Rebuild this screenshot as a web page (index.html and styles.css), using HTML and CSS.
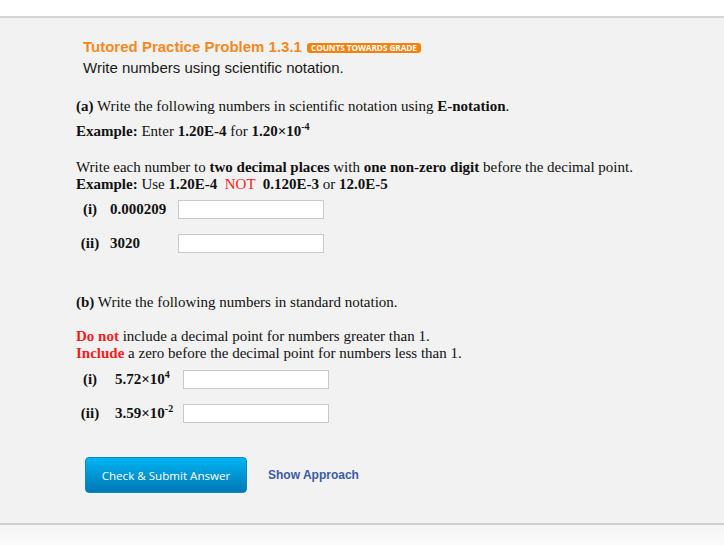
FILE: index.html
```html
<!DOCTYPE html>
<html lang="en">
<head>
<meta charset="utf-8">
<title>Tutored Practice Problem 1.3.1</title>
<link rel="stylesheet" href="styles.css">
</head>
<body>
<div class="topbar"></div>
<main class="panel">
  <header class="head">
    <h1 class="title">Tutored Practice Problem 1.3.1<span class="badge">COUNTS TOWARDS GRADE</span></h1>
    <p class="subtitle">Write numbers using scientific notation.</p>
  </header>
  <section class="content">
    <p class="p-a"><b>(a)</b> Write the following numbers in scientific notation using <b>E-notation</b>.</p>
    <p class="p-ex"><b>Example:</b> Enter <b>1.20E-4</b> for <b>1.20×10<sup>-4</sup></b></p>
    <p class="p-rule">Write each number to <b>two decimal places</b> with <b>one non-zero digit</b> before the decimal point.<br><b>Example:</b> Use <b>1.20E-4</b> &nbsp;<span class="red">NOT</span> &nbsp;<b>0.120E-3</b> or <b>12.0E-5</b></p>
    <div class="qtable qa">
      <span class="lbl">(i)</span><span class="num">0.000209</span><input class="ans" type="text" aria-label="(a)(i)">
      <span class="lbl">(ii)</span><span class="num">3020</span><input class="ans" type="text" aria-label="(a)(ii)">
    </div>
    <p class="p-b"><b>(b)</b> Write the following numbers in standard notation.</p>
    <p class="p-rule2"><b class="red">Do not</b> include a decimal point for numbers greater than 1.<br><b class="red">Include</b> a zero before the decimal point for numbers less than 1.</p>
    <div class="qtable qb">
      <span class="lbl">(i)</span><span class="num">5.72×10<sup>4</sup></span><input class="ans" type="text" aria-label="(b)(i)">
      <span class="lbl">(ii)</span><span class="num">3.59×10<sup>-2</sup></span><input class="ans" type="text" aria-label="(b)(ii)">
    </div>
    <div class="actions">
      <button class="submit" type="button">Check &amp; Submit Answer</button>
      <a class="approach" href="#">Show Approach</a>
    </div>
  </section>
</main>
<div class="footer"></div>
</body>
</html>
```
FILE: styles.css
```css
html, body {
  margin: 0;
  padding: 0;
  background: #ffffff;
}
.topbar {
  height: 16px;
  background: #ffffff;
}
.panel {
  background: #f2f2f2;
  border-top: 2px solid #d6d6d6;
  border-bottom: 2px solid #d0d0d0;
  padding: 18px 0 30px 0;
}
.head {
  padding-left: 83px;
  font-family: "Liberation Sans", Arial, sans-serif;
  font-size: 15px;
  line-height: 21px;
}
.title {
  margin: 0;
  font-size: 15px;
  font-weight: bold;
  color: #f5891e;
}
.badge {
  display: inline-block;
  vertical-align: 1px;
  margin-left: 5px;
  padding: 0 4px;
  height: 10px;
  line-height: 10px;
  border-radius: 3px;
  background: #f7820b;
  color: #ffffff;
  font-family: "Open Sans", sans-serif;
  font-weight: 700;
  font-size: 8.3px;
  letter-spacing: -0.1px;
}
.subtitle {
  margin: 0;
  color: #1a1a1a;
}
.content {
  padding-left: 76px;
  font-family: "Liberation Serif", "Times New Roman", serif;
  font-size: 15px;
  line-height: 17px;
  color: #111111;
}
.content p {
  margin: 0;
}
.content sup {
  font-size: 10px;
  line-height: 0;
  vertical-align: 6px;
}
.content .p-a { margin-top: 20px; }
.content .p-ex { margin-top: 8px; }
.content .p-rule { margin-top: 19px; }
.content .p-b { margin-top: 41px; }
.content .p-rule2 { margin-top: 17px; }
.red { color: #ff1a1a; }
.qtable {
  display: grid;
  row-gap: 15px;
  align-items: center;
  font-weight: bold;
}
.qa { grid-template-columns: 28px 74px 146px; margin-top: 7px; }
.qb { grid-template-columns: 28px 78.5px 146px; margin-top: 8px; }
.qa .num { padding-left: 6px; }
.qb .num { padding-left: 11px; }
.lbl { text-align: center; }
.ans {
  box-sizing: border-box;
  width: 146px;
  height: 19px;
  margin: 0;
  padding: 0 3px;
  border: 1px solid #c9c9c9;
  background: #ffffff;
  font: 13px "Liberation Sans", sans-serif;
}
.actions {
  display: flex;
  align-items: center;
  gap: 21px;
  margin-top: 34px;
  margin-left: 9px;
}
.submit {
  box-sizing: border-box;
  width: 162px;
  height: 36px;
  margin: 0;
  padding: 0;
  border: 1px solid #0b86c6;
  border-radius: 4px;
  background: linear-gradient(#00b4f2, #0078b6);
  color: #ffffff;
  font-family: "Open Sans", sans-serif;
  font-size: 11.6px;
  cursor: pointer;
}
.approach {
  color: #3a5aa3;
  font-family: "Liberation Sans", Arial, sans-serif;
  font-weight: bold;
  font-size: 12px;
  text-decoration: none;
}
.footer {
  height: 40px;
  background: linear-gradient(#f6f6f6, #fdfdfd);
}
```
